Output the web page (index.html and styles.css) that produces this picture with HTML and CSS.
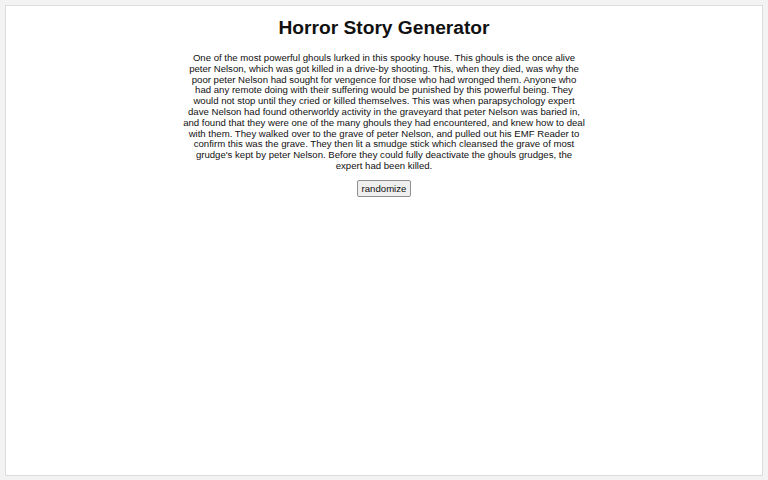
FILE: index.html
```html
<!DOCTYPE html>
<html lang="en">
<head>
    <meta charset="UTF-8">
    <meta name="viewport" content="width=device-width, initial-scale=1.0">
    <title>Horror Story Generator</title>
    <link rel="stylesheet" href="styles.css">
</head>
<body>
    <main class="page">
        <h1 class="title">Horror Story Generator</h1>
        <p class="story" id="story">One of the most powerful ghouls lurked in this spooky house. This ghouls is the once alive peter Nelson, which was got killed in a drive-by shooting. This, when they died, was why the poor peter Nelson had sought for vengence for those who had wronged them. Anyone who had any remote doing with their suffering would be punished by this powerful being. They would not stop until they cried or killed themselves. This was when parapsychology expert dave Nelson had found otherworldy activity in the graveyard that peter Nelson was baried in, and found that they were one of the many ghouls they had encountered, and knew how to deal with them. They walked over to the grave of peter Nelson, and pulled out his EMF Reader to confirm this was the grave. They then lit a smudge stick which cleansed the grave of most grudge's kept by peter Nelson. Before they could fully deactivate the ghouls grudges, the expert had been killed.</p>
        <button class="randomize" type="button">randomize</button>
    </main>
</body>
</html>
```

FILE: styles.css
```css
body {
    font-family: "Liberation Sans", Arial, sans-serif;
    margin: 0;
    padding: 5px;
    background-color: #f3f3f3;
}
.page {
    background-color: white;
    border: 1px solid #dcdcdc;
    height: 471px;
    box-sizing: border-box;
    display: flex;
    flex-direction: column;
    align-items: center;
}
.title {
    font-size: 19.2px;
    margin: 11px 0 0;
    color: #111;
}
.story {
    width: 403px;
    margin: 14px 0 0;
    font-size: 9.6px;
    line-height: 10.8px;
    text-align: center;
    color: #111;
}
.randomize {
    margin-top: 8px;
    font-family: "Liberation Sans", Arial, sans-serif;
    font-size: 9.6px;
    padding: 2px 4px;
    color: #111;
    background-color: #efefef;
    border: 1px solid #8f8f8f;
    border-radius: 2px;
}
```
